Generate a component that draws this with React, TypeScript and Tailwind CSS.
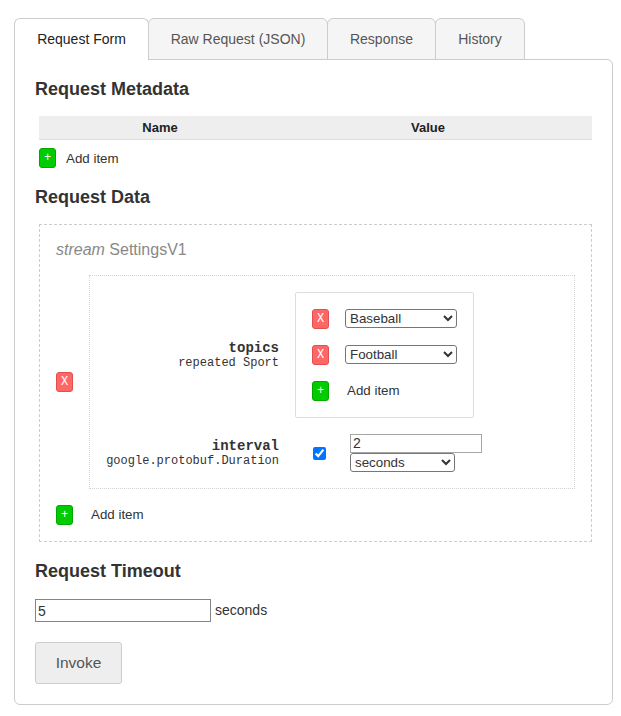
import React from 'react';

const tabs = [
  { label: 'Request Form', width: 'w-[135px]', active: true },
  { label: 'Raw Request (JSON)', width: 'w-[180px]', active: false },
  { label: 'Response', width: 'w-[109px]', active: false },
  { label: 'History', width: 'w-[90px]', active: false },
];

const RemoveButton = () => (
  <button className="w-[17px] h-5 shrink-0 rounded-[3px] border border-[#e05050] bg-[#ff6666] text-white text-[12px] leading-none font-['Liberation_Mono',monospace] flex items-center justify-center">
    X
  </button>
);

const AddItem = ({ gap, textClass = '' }: { gap: string; textClass?: string }) => (
  <div className={`flex items-center h-5 ${gap}`}>
    <button className="w-[17px] h-5 shrink-0 rounded-[3px] border border-[#00a800] bg-[#00cc00] text-white text-[12px] leading-none font-['Liberation_Mono',monospace] flex items-center justify-center">
      +
    </button>
    <span className={`text-[13.33px] ${textClass}`}>Add item</span>
  </div>
);

const SportSelect = ({ value, options, width }: { value: string; options: string[]; width: string }) => (
  <select
    defaultValue={value}
    className={`${width} h-[19px] text-[13.33px] leading-none bg-white border border-[#767676] rounded-[3px]`}
  >
    {options.map((o) => (
      <option key={o}>{o}</option>
    ))}
  </select>
);

const FieldLabel = ({ name, type }: { name: string; type: string }) => (
  <div className="w-[189px] shrink-0 text-right font-['Liberation_Mono',monospace]">
    <div className="text-[14px] leading-[14px] font-bold">{name}</div>
    <div className="text-[12px] leading-[14px] mt-px">{type}</div>
  </div>
);

const App = () => {
  const sports = ['Baseball', 'Football', 'Hockey'];

  return (
    <div className="w-[621px] h-[716px] bg-white pt-[18px] pl-[14px] text-[#333] font-['Liberation_Sans',Arial,sans-serif]">
      {/* tabs */}
      <div className="flex relative z-10 -mb-px">
        {tabs.map((t, i) => (
          <div
            key={t.label}
            className={`${t.width} ${i > 0 ? '-ml-px' : ''} h-[42px] flex items-center justify-center text-[14px] border border-[#ccc] rounded-t-[6px] ${
              t.active
                ? 'bg-white border-b-0 text-[#222] relative z-10'
                : 'bg-[#f5f5f5] text-[#555]'
            }`}
          >
            {t.label}
          </div>
        ))}
      </div>

      {/* panel */}
      <div className="w-[599px] border border-[#ccc] rounded-b-[6px] rounded-tr-[6px] pt-[19px] pb-5 pl-5 pr-5">
        <h2 className="text-[18px] leading-[21px] font-bold">Request Metadata</h2>

        <div className="ml-1 mt-4 h-6 bg-[#eee] border-b border-[#ddd] grid grid-cols-[242px_294px_1fr] items-center text-[13px] font-bold text-[#222]">
          <div className="text-center">Name</div>
          <div className="text-center">Value</div>
        </div>
        <div className="ml-1 mt-2">
          <AddItem gap="gap-[10px]" textClass="pt-px" />
        </div>

        <h2 className="text-[18px] leading-[21px] font-bold mt-[19px]">Request Data</h2>

        <div className="ml-1 mt-4 border border-dashed border-[#ccc] p-4">
          <div className="text-[16px] leading-[18px] text-[#888]">
            <em>stream</em> SettingsV1
          </div>
          <div className="flex items-center gap-4 mt-4">
            <RemoveButton />
            <div className="flex-1 border border-dotted border-[#d4d4d4] py-4 pr-4 flex flex-col gap-4">
              <div className="flex items-center gap-4">
                <FieldLabel name="topics" type="repeated Sport" />
                <div className="w-[179px] border border-[#ddd] rounded-[2px] p-4 flex flex-col gap-4">
                  <div className="flex items-start gap-4">
                    <RemoveButton />
                    <SportSelect value="Baseball" options={sports} width="w-[112px]" />
                  </div>
                  <div className="flex items-start gap-4">
                    <RemoveButton />
                    <SportSelect value="Football" options={sports} width="w-[112px]" />
                  </div>
                  <AddItem gap="gap-[18px]" />
                </div>
              </div>
              <div className="flex items-center gap-4">
                <FieldLabel name="interval" type="google.protobuf.Duration" />
                <div className="w-[39px] pl-[18px] flex">
                  <input type="checkbox" defaultChecked className="w-[13px] h-[13px]" />
                </div>
                <div className="flex flex-col">
                  <input
                    defaultValue="2"
                    className="w-[132px] h-[19px] px-[2px] text-[14px] bg-white border border-[#a6a6a6]"
                  />
                  <SportSelect value="seconds" options={['seconds', 'minutes']} width="w-[105px]" />
                </div>
              </div>
            </div>
          </div>
          <div className="mt-4">
            <AddItem gap="gap-[18px]" />
          </div>
        </div>

        <h2 className="text-[18px] leading-[21px] font-bold mt-[19px]">Request Timeout</h2>

        <div className="flex items-center gap-1 mt-[17px]">
          <input
            defaultValue="5"
            className="w-[176px] h-[23px] px-[2px] text-[14px] bg-white border border-[#858585]"
          />
          <span className="text-[14px]">seconds</span>
        </div>

        <button className="mt-5 w-[87px] h-[42px] block bg-[#eee] border border-[#ccc] rounded-[3px] text-[15.5px] text-[#555]">
          Invoke
        </button>
      </div>
    </div>
  );
};

export default App;
